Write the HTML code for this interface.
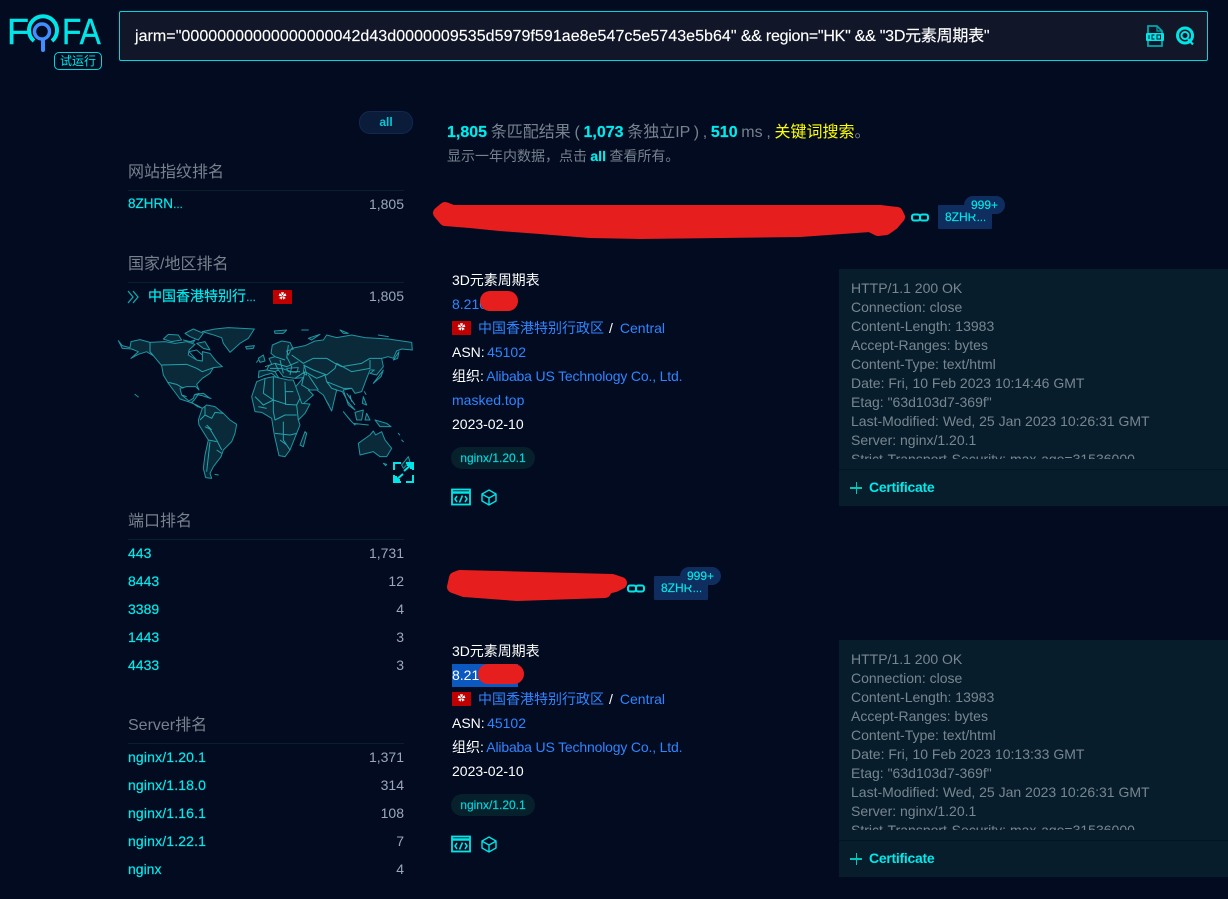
<!DOCTYPE html>
<html lang="zh">
<head>
<meta charset="utf-8">
<title>FOFA</title>
<style>
html,body{margin:0;padding:0;width:1228px;height:899px;overflow:hidden;background:#020b20;font-family:"Liberation Sans","Noto Sans CJK SC",sans-serif}
.t{position:absolute;white-space:nowrap;line-height:20px;font-size:14px}
.c{color:#00eaec;-webkit-text-stroke:.2px #00eaec}.b{color:#3085ff}.w{color:#fff}.g{color:#76828e}
.n{color:#9aa7bd;text-align:right;right:824px}
.h{position:absolute;left:128px;width:276px;height:1px;background:#0a1f2e}
.st{font-size:16px;color:#76828e}
.e{font-size:10px;letter-spacing:-.5px}
.panel{position:absolute;left:839px;width:389px;height:237px;background:#071d2c}
.panel pre{position:absolute;left:12px;top:10px;margin:0;height:180px;overflow:hidden;font:14px/19px "Liberation Sans",sans-serif;color:#78868f}
.panel i{position:absolute;left:0;right:0;top:200px;height:1px;background:#031524}
.panel b{position:absolute;left:30px;top:208px;font-size:14px;line-height:20px;color:#00eaec;letter-spacing:-.28px}
.panel s{position:absolute;left:11px;top:218px;width:12px;height:1.5px;background:#00c8b8}
.panel u{position:absolute;left:16.5px;top:212.5px;width:1.5px;height:12px;background:#00c8b8}
.tag{position:absolute;width:84px;height:22px;border-radius:11px;background:#06202c;color:#00d4d8;font-size:12px;line-height:22px;text-align:center;-webkit-text-stroke:.2px #00d4d8}
.fp{position:absolute;width:54px;height:24px;background:#0f2d5e;border-radius:1px;color:#00e5e8;font-size:12px;line-height:24px;padding-left:7px;box-sizing:border-box;-webkit-text-stroke:.2px #00e5e8}
.bd{position:absolute;width:41px;height:18px;border-radius:9px;background:#0f2d5e;color:#00e5e8;font-size:12px;line-height:18px;text-align:center;-webkit-text-stroke:.2px #00e5e8}
.flag{position:absolute;width:19px;height:14px;background:#c00000;color:#fff;font-size:8px;line-height:14px;text-align:center}
.ws{word-spacing:-1.5px}
.org{letter-spacing:-.17px;word-spacing:0}
svg{position:absolute;overflow:visible}
</style>
</head>
<body>

<!-- logo -->
<div class="t" style="left:7px;top:12px;font-size:36px;line-height:40px;color:#00e5e8;-webkit-text-stroke:.4px #00e5e8">F</div>
<div class="t" style="left:62px;top:12px;font-size:36px;line-height:40px;color:#00e5e8;-webkit-text-stroke:.4px #00e5e8;transform:scaleX(.88);transform-origin:0 0">FA</div>
<svg style="left:0;top:0" width="110" height="60" fill="none">
<path d="M34 41A14 14 0 1 1 52 41" stroke="#00e5e8" stroke-width="4"/>
<circle cx="42" cy="31.500" r="7.500" stroke="#3f8fff" stroke-width="3.500"/>
<path d="M43 40V50" stroke="#3f8fff" stroke-width="4" stroke-linecap="round"/>
</svg>
<div class="t" style="left:54px;top:52px;width:46px;height:16px;border:1px solid #00d8e0;border-radius:5px;font-size:12px;line-height:17px;color:#00e5e8;text-align:center">试运行</div>

<!-- search -->
<div style="position:absolute;left:119px;top:11px;width:1087px;height:48px;background:#111729;border:1px solid #00d8e0;border-radius:2px"></div>
<div class="t w" style="left:135px;top:27px;font-size:16px;letter-spacing:.05px;-webkit-text-stroke:.15px #fff">jarm="00000000000000000042d43d0000009535d5979f591ae8e547c5e5743e5b64"<span style="letter-spacing:-.25px"> &amp;&amp; region="HK" &amp;&amp; "3D元素周期表"</span></div>
<svg style="left:1140px;top:20px" width="60" height="32" fill="none">
<path d="M8 13V6H17L22 11V13M22 21V26H8V21" stroke="#00a8ac" stroke-width="1.800"/>
<path d="M17 6V11H22" stroke="#00a8ac" stroke-width="1.200"/>
<rect x="6" y="13" width="18" height="8" rx="1" fill="#00e5e8"/>
<path d="M9 15V19M14.500 15H12V19H14.500M17 15H20.500V19H17Z" stroke="#111729" stroke-width="1"/>
<circle cx="45" cy="15.500" r="7.500" stroke="#00e5e8" stroke-width="3"/>
<circle cx="45" cy="15.500" r="3.500" stroke="#00e5e8" stroke-width="2"/>
<path d="M48 19L53 24.500" stroke="#00e5e8" stroke-width="2.200"/>
</svg>

<!-- sidebar -->
<div class="t" style="left:359px;top:111px;width:52px;height:21px;border:1px solid #11294f;border-radius:11px;background:#0b1c3a;color:#00c8d8;font-size:12px;font-weight:bold;line-height:21px;text-align:center">all</div>

<div class="t st" style="left:128px;top:163px">网站指纹排名</div>
<div class="h" style="top:190px"></div>
<div class="t c" style="left:128px;top:194px;font-size:13.500px">8ZHRN<span class="e">…</span></div>
<div class="t n" style="top:194px">1,805</div>

<div class="t st" style="left:128px;top:255px">国家/地区排名</div>
<div class="h" style="top:282px"></div>
<svg style="left:127px;top:290px" width="14" height="14" fill="none" stroke="#0aa8b0" stroke-width="1.300"><path d="M1 1L6 7L1 13M6 1L11 7L6 13"/></svg>
<div class="t c" style="left:148px;top:286px">中国香港特别行<span class="e">…</span></div>
<div class="flag" style="left:273px;top:290px">✿</div>
<div class="t n" style="top:286px">1,805</div>

<!-- world map -->
<svg style="left:0;top:0" width="1228" height="899" fill="#0b2a39" stroke="#1f95a2" stroke-width="3" stroke-linejoin="round">
<g transform="translate(115,325) scale(.33333)">
<path d="M10 47L22 62L45 68L48 50L75 44L105 52L150 50L180 55L215 50L240 58L222 75L220 90L245 105L262 108L262 80L285 85L305 110L322 125L295 128L285 145L262 160L245 178L252 195L242 185L215 185L195 190L200 210L222 228L235 220L238 210L252 205L238 225L230 232L248 245L262 250L245 240L225 232L195 222L175 195L160 175L145 150L140 122L115 92L95 80L70 88L48 100L70 80L50 72L22 70Z"/>
<path d="M222 80L245 75L262 90L262 108L245 105Z" fill="#020b20"/>
<path d="M145 42L160 28L190 30L200 45L170 50ZM210 25L235 12L265 25L250 45L225 35ZM205 45L225 50L240 45L235 52ZM245 55L270 50L285 75L265 70Z"/>
<path d="M262 20L300 12L340 8L418 12L400 40L375 55L345 82L325 55L320 38L290 28Z"/>
<path d="M392 65L418 62L415 70L395 72ZM240 208L265 205L285 220L262 212ZM270 215L288 220ZM60 208L70 216ZM300 448L310 450Z"/>
<path d="M262 250L275 240L300 245L325 265L345 285L365 298L360 325L350 350L325 375L318 395L295 425L285 445L290 460L272 458L265 430L270 390L280 345L252 300L250 285Z"/>
<g fill="none" stroke="#23a2ae">
<path d="M105 52V80L115 92M140 120L215 118L245 130L262 140L295 128M160 172L185 178L205 190M200 210L215 215"/>
<path d="M270 245L270 270L255 285M270 270L290 280L300 262L325 265M270 305L285 312L305 345L320 375M280 345L305 350M290 315L275 300M285 350L275 440M305 375L320 385"/>
</g>
</g>
<g transform="translate(255,325) scale(.33333)">
<path d="M10 158L12 138L35 135L42 122L50 118L42 100L60 95L48 85L52 60L80 48L105 52L115 72L95 78L100 90L110 70L150 62L180 48L205 45L215 30L245 38L290 30L330 38L400 42L470 52L472 75L440 72L425 78L415 100L400 95L380 100L385 125L365 150L345 145L358 135L345 135L335 160L320 200L300 205L290 190L265 195L280 240L300 255L280 232L262 200L245 195L230 258L205 210L185 195L160 195L175 210L135 245L118 190L145 158L120 160L85 155L70 135L60 140L75 165L50 145L30 150Z"/>
<path d="M-10 215L5 170L30 160L55 155L100 165L115 165L135 220L140 235L165 237L150 265L130 285L135 300L125 325L105 375L90 395L72 392L58 330L50 280L20 262L0 260Z"/>
<path d="M95 130L130 128L125 142L100 140ZM148 120L155 150L145 145Z" fill="#020b20"/>
<path d="M355 175L385 135L378 155ZM415 105L432 80L428 100ZM328 200L333 208ZM325 215L335 240L322 235ZM265 260L290 290L300 300L285 285ZM295 295L340 300ZM300 262L325 255L320 285L305 285ZM335 265L345 285L330 285ZM360 285L395 295L408 305L375 305ZM160 40L195 28L170 45ZM58 18L95 15L85 25L60 25ZM140 15L160 15ZM255 15L280 25L265 25ZM370 30L400 35ZM10 100L25 90L30 108L15 112ZM5 112L10 105ZM150 320L155 325L145 365L135 360Z"/>
<path d="M310 355L345 330L355 318L362 330L380 320L390 345L410 370L395 395L375 395L355 380L315 390Z"/>
<path d="M385 415L395 418L392 422ZM440 420L460 395L465 410L445 430ZM440 345L445 350ZM430 325L434 330ZM215 230L222 240Z"/>
<g fill="none" stroke="#23a2ae">
<path d="M55 155L55 260M0 215L25 240L55 225L95 238L125 240L135 220M90 170L92 240M30 160L25 205L55 225M55 260L60 285L90 270L125 270M60 325L105 330L125 325M85 290L85 345L105 375M75 345L95 360M90 200H115M10 245L35 250M125 240L130 285"/>
<path d="M30 125L60 115L95 125L130 110M60 115L70 135M75 105L85 145M95 95L110 125L105 150M45 130L80 130L110 140L135 140M60 95L90 105M100 60L95 100M35 135L60 140"/>
<path d="M110 90L145 115L175 100L215 100L240 115L260 125L320 115L345 100L380 100M145 120L175 135L215 150L240 130L245 115M150 140L185 160L210 150L215 170L230 190L245 195M160 150L190 195M120 160L150 140L140 180L165 195M215 170L265 190L290 190M245 115L290 140L345 130L345 105M275 205L300 240M285 210L290 230"/>
</g>
</g>
</svg>
<svg style="left:393px;top:462px" width="21" height="21" fill="none" stroke="#00e5e8" stroke-width="2"><path d="M1 8V1H8M13 1H20V8M1 13V20H8M13 20H20V13M11 9L18 3M14 3H18V7M10 12L3 18M3 14V18H7"/></svg>

<div class="t st" style="left:128px;top:512px">端口排名</div>
<div class="h" style="top:539px"></div>
<div class="t c" style="left:128px;top:543px">443</div><div class="t n" style="top:543px">1,731</div>
<div class="t c" style="left:128px;top:571px">8443</div><div class="t n" style="top:571px">12</div>
<div class="t c" style="left:128px;top:599px">3389</div><div class="t n" style="top:599px">4</div>
<div class="t c" style="left:128px;top:627px">1443</div><div class="t n" style="top:627px">3</div>
<div class="t c" style="left:128px;top:655px">4433</div><div class="t n" style="top:655px">3</div>

<div class="t st" style="left:128px;top:716px">Server排名</div>
<div class="h" style="top:743px"></div>
<div class="t c" style="left:128px;top:747px;letter-spacing:.15px">nginx/1.20.1</div><div class="t n" style="top:747px">1,371</div>
<div class="t c" style="left:128px;top:775px;letter-spacing:.15px">nginx/1.18.0</div><div class="t n" style="top:775px">314</div>
<div class="t c" style="left:128px;top:803px;letter-spacing:.15px">nginx/1.16.1</div><div class="t n" style="top:803px">108</div>
<div class="t c" style="left:128px;top:831px;letter-spacing:.15px">nginx/1.22.1</div><div class="t n" style="top:831px">7</div>
<div class="t c" style="left:128px;top:859px">nginx</div><div class="t n" style="top:859px">4</div>

<!-- summary -->
<div class="t g" style="left:447px;top:123px;font-size:16px;word-spacing:-.75px"><b class="c">1,805</b> 条匹配结果 ( <b class="c">1,073</b> 条独立IP ) , <b class="c">510</b> ms , <span style="color:#ffff00">关键词搜索</span>。</div>
<div class="t g" style="left:447px;top:146px;font-size:14px;word-spacing:-.5px">显示一年内数据，点击 <b class="c">all</b> 查看所有。</div>

<!-- redaction scribbles -->
<svg style="left:0;top:0" width="1228" height="899" fill="#e61e1e" stroke="#e61e1e" stroke-width="12" stroke-linecap="round" stroke-linejoin="round">
<path d="M439 213L445 208L453 211L880 211L897 213L899 217L893 224L886 229L878 230L870 226L800 231L640 233L590 232L540 228L500 225L470 222L445 220Z"/>
<path d="M455 578L460 576L612 580L621 583L615 586L607 588L605 592L517 595L464 591L453 587Z"/>
</svg>

<!-- result 1 -->
<svg style="left:911px;top:213px" width="18" height="10" fill="none" stroke="#00e5e8" stroke-width="2"><rect x="1" y="1.500" width="8" height="6" rx="2"/><rect x="9" y="1.500" width="8" height="6" rx="2"/></svg>
<div class="fp" style="left:938px;top:205px">8ZHR<span class="e">…</span></div>
<div class="bd" style="left:964px;top:196px">999+</div>

<div class="t w" style="left:452px;top:270px;font-size:14px;letter-spacing:-.05px">3D元素周期表</div>
<div class="t b" style="left:452px;top:294px">8.210</div>
<div style="position:absolute;left:480px;top:291px;width:38px;height:20px;background:#e61e1e;border-radius:11px"></div>
<div class="flag" style="left:452px;top:321px">✿</div>
<div class="t b" style="left:478px;top:318px">中国香港特别行政区<span style="margin:0 7px 0 5px;color:#fff">/</span>Central</div>
<div class="t w ws" style="left:452px;top:342px">ASN: <span class="b">45102</span></div>
<div class="t w ws" style="left:452px;top:366px">组织: <span class="b org">Alibaba US Technology Co., Ltd.</span></div>
<div class="t b" style="left:452px;top:390px">masked.top</div>
<div class="t w" style="left:452px;top:414px">2023-02-10</div>
<div class="tag" style="left:451px;top:447px">nginx/1.20.1</div>
<svg style="left:451px;top:488px" width="48" height="18" fill="none" stroke="#00e5e8"><rect x="1" y="1.500" width="18" height="15" stroke-width="1.800"/><path d="M1 4.500H19" stroke-width="2.500"/><path d="M6 8L4 11L6 14M14 8L16 11L14 14M11.500 7.500L8.500 14.500" stroke-width="1.600"/><path d="M38 2L45 6V13L38 17L31 13V6ZM31.500 6.500L38 10L44.500 6.500M38 10V16.500" stroke-width="1.400"/></svg>

<div class="panel" style="top:269px"><pre>HTTP/1.1 200 OK
Connection: close
Content-Length: 13983
Accept-Ranges: bytes
Content-Type: text/html
Date: Fri, 10 Feb 2023 10:14:46 GMT
Etag: "63d103d7-369f"
Last-Modified: Wed, 25 Jan 2023 10:26:31 GMT
Server: nginx/1.20.1
Strict-Transport-Security: max-age=31536000</pre><i></i><s></s><u></u><b>Certificate</b></div>

<!-- result 2 -->
<svg style="left:627px;top:584px" width="18" height="10" fill="none" stroke="#00e5e8" stroke-width="2"><rect x="1" y="1.500" width="8" height="6" rx="2"/><rect x="9" y="1.500" width="8" height="6" rx="2"/></svg>
<div class="fp" style="left:654px;top:576px">8ZHR<span class="e">…</span></div>
<div class="bd" style="left:680px;top:567px">999+</div>

<div class="t w" style="left:452px;top:641px;font-size:14px;letter-spacing:-.05px">3D元素周期表</div>
<div style="position:absolute;left:452px;top:664px;width:66px;height:23px;background:#0a58c0"></div>
<div class="t w" style="left:452px;top:665px">8.21</div>
<div style="position:absolute;left:478px;top:664px;width:46px;height:20px;background:#e61e1e;border-radius:10px"></div>
<div class="flag" style="left:452px;top:692px">✿</div>
<div class="t b" style="left:478px;top:689px">中国香港特别行政区<span style="margin:0 7px 0 5px;color:#fff">/</span>Central</div>
<div class="t w ws" style="left:452px;top:713px">ASN: <span class="b">45102</span></div>
<div class="t w ws" style="left:452px;top:737px">组织: <span class="b org">Alibaba US Technology Co., Ltd.</span></div>
<div class="t w" style="left:452px;top:761px">2023-02-10</div>
<div class="tag" style="left:451px;top:794px">nginx/1.20.1</div>
<svg style="left:451px;top:835px" width="48" height="18" fill="none" stroke="#00e5e8"><rect x="1" y="1.500" width="18" height="15" stroke-width="1.800"/><path d="M1 4.500H19" stroke-width="2.500"/><path d="M6 8L4 11L6 14M14 8L16 11L14 14M11.500 7.500L8.500 14.500" stroke-width="1.600"/><path d="M38 2L45 6V13L38 17L31 13V6ZM31.500 6.500L38 10L44.500 6.500M38 10V16.500" stroke-width="1.400"/></svg>

<div class="panel" style="top:640px"><pre>HTTP/1.1 200 OK
Connection: close
Content-Length: 13983
Accept-Ranges: bytes
Content-Type: text/html
Date: Fri, 10 Feb 2023 10:13:33 GMT
Etag: "63d103d7-369f"
Last-Modified: Wed, 25 Jan 2023 10:26:31 GMT
Server: nginx/1.20.1
Strict-Transport-Security: max-age=31536000</pre><i></i><s></s><u></u><b>Certificate</b></div>

</body>
</html>
